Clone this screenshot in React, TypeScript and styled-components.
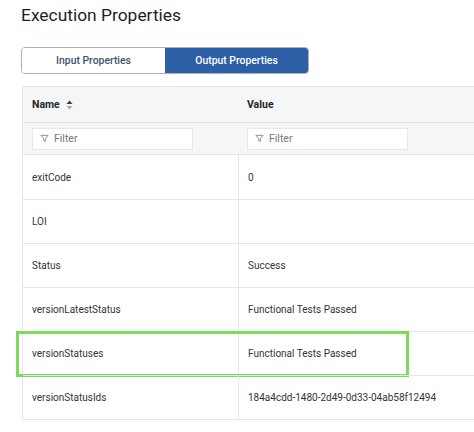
import React from 'react';
import styled, { createGlobalStyle } from 'styled-components';

const GlobalStyle = createGlobalStyle`
  body {
    margin: 0;
    background: #fff;
    font-family: Roboto, "Liberation Sans", Arial, sans-serif;
    color: #2b2b2b;
    overflow: hidden;
  }
`;

const Page = styled.div`
  padding: 3px 0 0 21px;
  width: 474px;
  box-sizing: border-box;
`;

const Title = styled.h1`
  margin: 0;
  font-size: 17.4px;
  line-height: 24px;
  font-weight: 400;
  color: #1f1f1f;
`;

const Tabs = styled.div`
  display: flex;
  width: 288px;
  height: 27px;
  margin-top: 20px;
  border: 1px solid #a9b0b8;
  border-radius: 4px;
  box-sizing: border-box;
  overflow: hidden;
`;

const Tab = styled.div<{ $active?: boolean }>`
  flex: 1;
  display: flex;
  align-items: center;
  justify-content: center;
  font-size: 10.4px;
  font-weight: 500;
  background: ${(p) => (p.$active ? '#2c5fa5' : '#fff')};
  color: ${(p) => (p.$active ? '#fff' : '#3d5370')};
`;

const Table = styled.div`
  margin-top: 12px;
  margin-left: 1px;
  width: 460px;
  border: 1px solid #e4e6e9;
  border-right: none;
`;

const HeadRow = styled.div`
  display: grid;
  grid-template-columns: 215px 1fr;
  height: 35px;
  align-items: center;
  background: #f5f6f8;
  border-bottom: 1px solid #e2e4e7;
  font-size: 10.5px;
  font-weight: 700;
  color: #262626;
  > div {
    padding-left: 9px;
    display: flex;
    align-items: center;
  }
`;

const SortIcon = styled.svg`
  margin-left: 6px;
`;

const FilterRow = styled.div`
  display: grid;
  grid-template-columns: 215px 1fr;
  height: 31px;
  align-items: center;
  background: #f5f6f8;
  border-bottom: 1px solid #e2e4e7;
  > div {
    padding-left: 9px;
  }
`;

const FilterBox = styled.div`
  width: 161px;
  height: 22px;
  box-sizing: border-box;
  background: #fff;
  border: 1px solid #e6e8eb;
  display: flex;
  align-items: center;
  padding-left: 7px;
  gap: 5px;
  font-size: 10.5px;
  color: #777;
`;

const Row = styled.div`
  position: relative;
  display: grid;
  grid-template-columns: 215px 1fr;
  height: 44px;
  box-sizing: border-box;
  font-size: 10px;
  color: #333;
  & + & {
    border-top: 1px solid #e4e6e9;
  }
`;

const Cell = styled.div`
  display: flex;
  align-items: center;
  padding-left: 9px;
  & + & {
    border-left: 1px solid #e4e6e9;
  }
`;

const Highlight = styled.div`
  position: absolute;
  left: -7px;
  top: -1px;
  width: 393px;
  height: 46px;
  box-sizing: border-box;
  border: 3px solid #7ddb5b;
  pointer-events: none;
`;

const FunnelIcon = () => (
  <svg width="9" height="9" viewBox="0 0 10 10">
    <path d="M1 1.5h8L5.9 5.3v3.2L4.1 7.6V5.3z" fill="none" stroke="#8a8a8a" strokeWidth="1" strokeLinejoin="round" />
  </svg>
);

const rows = [
  { name: 'exitCode', value: '0' },
  { name: 'LOI', value: '' },
  { name: 'Status', value: 'Success' },
  { name: 'versionLatestStatus', value: 'Functional Tests Passed' },
  { name: 'versionStatuses', value: 'Functional Tests Passed', marked: true },
  { name: 'versionStatusIds', value: '184a4cdd-1480-2d49-0d33-04ab58f12494' },
];

const App: React.FC = () => {
  return (
    <>
      <GlobalStyle />
      <Page>
        <Title>Execution Properties</Title>
        <Tabs>
          <Tab>Input Properties</Tab>
          <Tab $active>Output Properties</Tab>
        </Tabs>
        <Table>
          <HeadRow>
            <div>
              Name
              <SortIcon width="7" height="10" viewBox="0 0 7 10">
                <path d="M3.5 0.5L6.5 4H0.5z" fill="#3a3a3a" />
                <path d="M3.5 9.5L6.5 6H0.5z" fill="#a8a8a8" />
              </SortIcon>
            </div>
            <div>Value</div>
          </HeadRow>
          <FilterRow>
            <div>
              <FilterBox>
                <FunnelIcon />
                Filter
              </FilterBox>
            </div>
            <div>
              <FilterBox>
                <FunnelIcon />
                Filter
              </FilterBox>
            </div>
          </FilterRow>
          {rows.map((r) => (
            <Row key={r.name}>
              <Cell>{r.name}</Cell>
              <Cell>{r.value}</Cell>
              {r.marked && <Highlight />}
            </Row>
          ))}
        </Table>
      </Page>
    </>
  );
};

export default App;
